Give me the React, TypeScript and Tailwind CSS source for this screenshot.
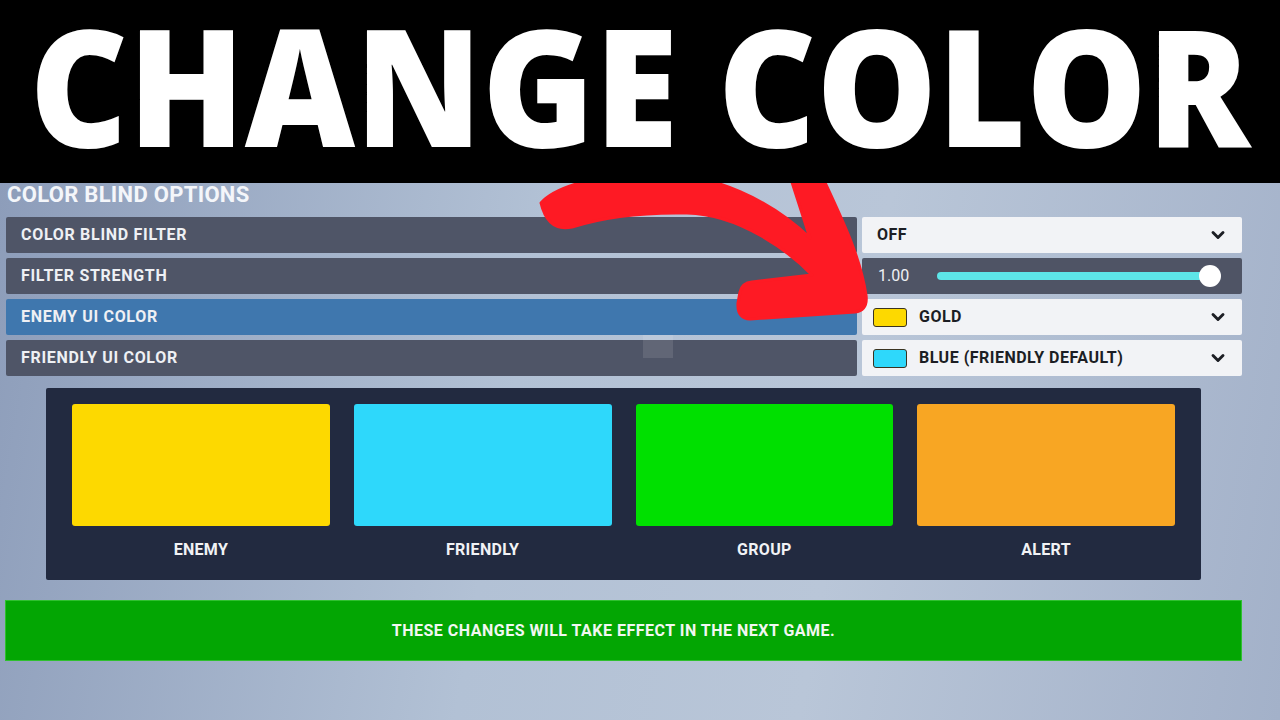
import { ChevronDown } from "lucide-react";

const rows = [
  { label: "COLOR BLIND FILTER", active: false },
  { label: "FILTER STRENGTH", active: false },
  { label: "ENEMY UI COLOR", active: true },
  { label: "FRIENDLY UI COLOR", active: false },
];

const swatches = [
  { name: "ENEMY", color: "bg-[#fdd900]" },
  { name: "FRIENDLY", color: "bg-[#2ed8fb]" },
  { name: "GROUP", color: "bg-[#00e000]" },
  { name: "ALERT", color: "bg-[#f8a623]" },
];

function Select({ swatch, text }: { swatch?: string; text: string }) {
  return (
    <div className="flex h-9 items-center rounded-[2px] bg-[#f2f3f6] pl-[11px] pr-[14px] text-[#1c1e24]">
      {swatch ? (
        <span
          className={`mr-[12px] h-[19px] w-[34px] rounded-[3px] border-[1.5px] border-[#3a3320] ${swatch}`}
        />
      ) : (
        <span className="w-[4px]" />
      )}
      <span className="flex-1 text-[16px] font-bold tracking-[0.5px]">{text}</span>
      <ChevronDown className="h-5 w-5" strokeWidth={3.5} />
    </div>
  );
}

function Slider() {
  return (
    <div className="flex h-9 items-center rounded-[2px] bg-[#4f5465] pl-[16px] pr-[32px]">
      <span className="w-[59px] text-[16px] text-[#eef0f4]">1.00</span>
      <div className="relative flex-1">
        <div className="h-[8px] rounded-full bg-[#5de6e8]" />
        <div className="absolute right-[-11px] top-[-7px] h-[22px] w-[22px] rounded-full bg-white" />
      </div>
    </div>
  );
}

// red annotation arrow drawn over the settings rows (coords are page coords)
function Arrow() {
  return (
    <svg
      className="pointer-events-none absolute left-0 top-0 z-[5]"
      width="1280"
      height="537"
      viewBox="0 183 1280 537"
    >
      <path
        d="M541 203 C556 186 600 174 655 173 C715 174 770 200 810 238 L790 176 L822 176 C840 215 860 255 866 295 Q868 310 855 312 L750 319 Q737 318 738 303 L740 292 Q742 283 752 282 L812 275 C790 252 740 214 687 213 C640 212 600 218 572 227 Q548 232 541 203 Z"
        fill="#fe1a24"
        stroke="#fe1a24"
        strokeWidth="3"
        strokeLinejoin="round"
      />
    </svg>
  );
}

export default function App() {
  return (
    <div className="flex h-[720px] w-[1280px] flex-col overflow-hidden font-['Roboto',sans-serif]">
      <div className="relative z-10 flex h-[183px] shrink-0 items-center justify-center overflow-hidden bg-black">
        <h1 className="mb-[16px] scale-x-[1.014] scale-y-[1.093] whitespace-nowrap font-['Open_Sans',sans-serif] text-[150px] font-extrabold leading-none text-white">
          CHANGE COLOR
        </h1>
      </div>

      <div className="relative flex-1 bg-[linear-gradient(100deg,#8d9dba_0%,#b2c1d5_40%,#b9c6d8_65%,#a3b1c9_100%)]">
        <Arrow />
        <div className="relative flex flex-col px-[6px]">
          <h2 className="pl-[1px] text-[22px] font-bold leading-[24px] tracking-[0.3px] text-[#f4f6fa]">
            COLOR BLIND OPTIONS
          </h2>
          <div className="mt-[10px] grid grid-cols-[851px_380px] gap-x-[5px] gap-y-[5px]">
            {rows.map((r, i) => (
              <div key={r.label} className="contents">
                <div
                  className={`flex h-9 items-center rounded-[2px] pl-[15px] text-[16px] font-bold tracking-[0.7px] text-[#eef0f4] ${
                    r.active ? "bg-[#3f77ae]" : "bg-[#4f5567]"
                  }`}
                >
                  {r.label}
                </div>
                {i === 0 && <Select text="OFF" />}
                {i === 1 && <Slider />}
                {i === 2 && <Select swatch="bg-[#fdd900]" text="GOLD" />}
                {i === 3 && <Select swatch="bg-[#2ed8fb]" text="BLUE (FRIENDLY DEFAULT)" />}
              </div>
            ))}
          </div>

          <div className="ml-[40px] mt-[12px] w-[1155px] rounded-[2px] bg-[#222a40] px-[26px] pt-[16px]">
            <div className="grid grid-cols-4 gap-x-[24px]">
              {swatches.map((s) => (
                <div key={s.name} className="flex flex-col items-center">
                  <div className={`h-[122px] w-full rounded-[3px] ${s.color}`} />
                  <span className="mt-[12px] h-[42px] text-[16px] font-bold tracking-[0.3px] text-[#f1f2f5]">
                    {s.name}
                  </span>
                </div>
              ))}
            </div>
          </div>

          <div className="ml-[-1px] mt-[20px] flex h-[61px] w-[1237px] items-center justify-center border border-[#2fc02f] bg-[#03a603] pr-[20px] text-[16px] font-bold tracking-[0.5px] text-[#f2f7f2]">
            THESE CHANGES WILL TAKE EFFECT IN THE NEXT GAME.
          </div>

          <div className="absolute left-[643px] top-[152px] h-[23px] w-[30px] bg-white/10" />
        </div>
      </div>
    </div>
  );
}
